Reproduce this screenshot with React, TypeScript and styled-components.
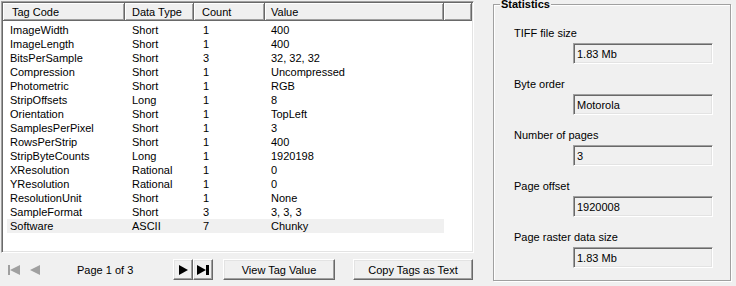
import styled, { createGlobalStyle } from "styled-components";

const GlobalStyle = createGlobalStyle`
  body {
    margin: 0;
    background: #f0f0f0;
    font-family: "Liberation Sans", Arial, sans-serif;
    font-size: 11px;
    color: #000;
  }
`;

const Window = styled.div`
  display: flex;
  width: 736px;
  height: 286px;
  overflow: hidden;
  background: #f0f0f0;
`;

const LeftPane = styled.div`
  display: flex;
  flex-direction: column;
  width: 473px;
  padding: 1px 0 0 1px;
`;

const ListBox = styled.div`
  height: 248px;
  border: 1px solid;
  border-color: #a0a0a0 #fff #fff #a0a0a0;
  box-shadow: inset 1px 1px 0 #696969, inset -1px -1px 0 #e3e3e3;
  background: #fff;
  padding: 1px;
  overflow: hidden;
`;

const cols = "122px 69px 71px 179px 1fr";

const Header = styled.div`
  display: grid;
  grid-template-columns: ${cols};
  height: 18px;
`;

const HeadCell = styled.div<{ $pad?: number }>`
  display: flex;
  align-items: center;
  padding-left: ${(p) => p.$pad ?? 7}px;
  background: #f0f0f0;
  border-right: 1px solid #696969;
  border-bottom: 1px solid #696969;
  box-shadow: inset 1px 1px 0 #fff, inset -1px -1px 0 #a0a0a0;
  white-space: nowrap;
`;

const Rows = styled.div`
  padding-top: 2px;
`;

const Row = styled.div<{ $selected?: boolean }>`
  display: grid;
  grid-template-columns: 118px 69px 71px 179px;
  height: 14px;
  line-height: 14px;
  margin-left: 4px;
  width: 437px;
  background: ${(p) => (p.$selected ? "#f0f0f0" : "transparent")};
`;

const Cell = styled.div<{ $pad?: number }>`
  padding-left: ${(p) => p.$pad ?? 7}px;
  white-space: nowrap;
  overflow: hidden;
`;

const BottomBar = styled.div`
  display: flex;
  align-items: center;
  height: 33px;
`;

const NavIcon = styled.svg<{ $gap: number }>`
  margin-left: ${(p) => p.$gap}px;
  display: block;
`;

const PageLabel = styled.div`
  width: 96px;
  margin-left: 37px;
  padding-top: 1px;
`;

const RaisedButton = styled.button<{ $w: number; $gap?: number }>`
  width: ${(p) => p.$w}px;
  height: 21px;
  margin-left: ${(p) => p.$gap ?? 0}px;
  padding: 0;
  background: #f0f0f0;
  border: 1px solid;
  border-color: #fff #696969 #696969 #fff;
  box-shadow: inset -1px -1px 0 #a0a0a0, inset 1px 1px 0 #e3e3e3;
  font-family: inherit;
  font-size: 11px;
  color: #000;
  display: flex;
  align-items: center;
  justify-content: center;
`;

const GroupBox = styled.div`
  position: relative;
  margin: 4px 0 0 19px;
  width: 238px;
  height: 277px;
  border: 1px solid #a0a0a0;
  box-shadow: inset 1px 1px 0 #fff, 1px 1px 0 #fff;
  padding: 22px 0 0 20px;
  display: flex;
  flex-direction: column;
  gap: 14px;
  box-sizing: border-box;
`;

const Legend = styled.div`
  position: absolute;
  top: -7px;
  left: 6px;
  padding: 0 1px;
  background: #f0f0f0;
  font-weight: bold;
  font-size: 11px;
`;

const Field = styled.div`
  display: flex;
  flex-direction: column;
  gap: 3px;
`;

const FieldLabel = styled.div`
  height: 13px;
  line-height: 13px;
`;

const ReadOnlyBox = styled.div`
  margin-left: 59px;
  width: 140px;
  height: 21px;
  box-sizing: border-box;
  border: 1px solid;
  border-color: #a0a0a0 #fff #fff #a0a0a0;
  box-shadow: inset 1px 1px 0 #696969, inset -1px -1px 0 #e3e3e3;
  padding-left: 3px;
  display: flex;
  align-items: center;
`;

const tags: [string, string, string, string][] = [
  ["ImageWidth", "Short", "1", "400"],
  ["ImageLength", "Short", "1", "400"],
  ["BitsPerSample", "Short", "3", "32, 32, 32"],
  ["Compression", "Short", "1", "Uncompressed"],
  ["Photometric", "Short", "1", "RGB"],
  ["StripOffsets", "Long", "1", "8"],
  ["Orientation", "Short", "1", "TopLeft"],
  ["SamplesPerPixel", "Short", "1", "3"],
  ["RowsPerStrip", "Short", "1", "400"],
  ["StripByteCounts", "Long", "1", "1920198"],
  ["XResolution", "Rational", "1", "0"],
  ["YResolution", "Rational", "1", "0"],
  ["ResolutionUnit", "Short", "1", "None"],
  ["SampleFormat", "Short", "3", "3, 3, 3"],
  ["Software", "ASCII", "7", "Chunky"],
];

const stats = [
  ["TIFF file size", "1.83 Mb"],
  ["Byte order", "Motorola"],
  ["Number of pages", "3"],
  ["Page offset", "1920008"],
  ["Page raster data size", "1.83 Mb"],
];

export default function App() {
  return (
    <>
      <GlobalStyle />
      <Window>
        <LeftPane>
          <ListBox>
            <Header>
              <HeadCell $pad={9}>Tag Code</HeadCell>
              <HeadCell>Data Type</HeadCell>
              <HeadCell $pad={8}>Count</HeadCell>
              <HeadCell $pad={6}>Value</HeadCell>
              <HeadCell />
            </Header>
            <Rows>
              {tags.map((t, i) => (
                <Row key={t[0]} $selected={i === tags.length - 1}>
                  <Cell $pad={3}>{t[0]}</Cell>
                  <Cell>{t[1]}</Cell>
                  <Cell $pad={9}>{t[2]}</Cell>
                  <Cell $pad={6}>{t[3]}</Cell>
                </Row>
              ))}
            </Rows>
          </ListBox>
          <BottomBar>
            <NavIcon $gap={7} width="12" height="10" viewBox="0 0 12 10">
              <rect x="0" y="0" width="2" height="10" fill="#a0a0a0" />
              <polygon points="12,0 12,10 2,5" fill="#a0a0a0" />
            </NavIcon>
            <NavIcon $gap={10} width="10" height="10" viewBox="0 0 10 10">
              <polygon points="10,0 10,10 0,5" fill="#a0a0a0" />
            </NavIcon>
            <PageLabel>Page 1 of 3</PageLabel>
            <RaisedButton $w={20}>
              <svg width="9" height="10" viewBox="0 0 9 10">
                <polygon points="0,0 9,5 0,10" fill="#000" />
              </svg>
            </RaisedButton>
            <RaisedButton $w={20}>
              <svg width="12" height="10" viewBox="0 0 12 10">
                <polygon points="0,0 9,5 0,10" fill="#000" />
                <rect x="9" y="0" width="3" height="10" fill="#000" />
              </svg>
            </RaisedButton>
            <RaisedButton $w={112} $gap={10}>View Tag Value</RaisedButton>
            <RaisedButton $w={120} $gap={18}>Copy Tags as Text</RaisedButton>
          </BottomBar>
        </LeftPane>
        <GroupBox>
          <Legend>Statistics</Legend>
          {stats.map(([label, value]) => (
            <Field key={label}>
              <FieldLabel>{label}</FieldLabel>
              <ReadOnlyBox>{value}</ReadOnlyBox>
            </Field>
          ))}
        </GroupBox>
      </Window>
    </>
  );
}
